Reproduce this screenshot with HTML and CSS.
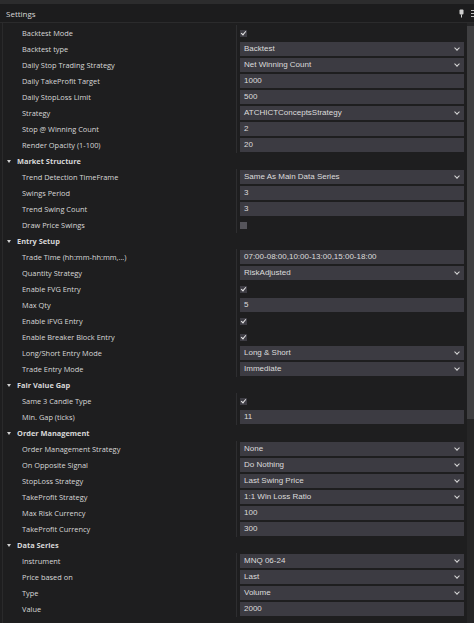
FILE: index.html
```html
<!DOCTYPE html>
<html>
<head>
<meta charset="utf-8">
<link rel="stylesheet" href="styles.css">
</head>
<body>
<div class="topbar"></div>
<div class="header">
  <span class="title">Settings</span>
  <span class="tools">
    <svg class="pin" width="5" height="9" viewBox="0 0 5 9"><rect x="0.5" y="0.5" width="4" height="5" rx="1" fill="#cfcfcf"/><rect x="2" y="5.5" width="1" height="3" fill="#cfcfcf"/></svg>
    <svg class="more" width="4" height="9" viewBox="0 0 4 9"><rect x="1" y="1" width="3" height="1" fill="#bdbdbd"/><rect x="1" y="4" width="3" height="1" fill="#bdbdbd"/><rect x="1" y="7" width="3" height="1" fill="#bdbdbd"/></svg>
  </span>
</div>
<div class="main">
  <div class="list">
    <div class="row"><div class="label">Backtest Mode</div><div class="value"><span class="check on"></span></div></div>
    <div class="row"><div class="label">Backtest type</div><div class="value"><div class="box select">Backtest</div></div></div>
    <div class="row"><div class="label">Daily Stop Trading Strategy</div><div class="value"><div class="box select">Net Winning Count</div></div></div>
    <div class="row"><div class="label">Daily TakeProfit Target</div><div class="value"><div class="box">1000</div></div></div>
    <div class="row"><div class="label">Daily StopLoss Limit</div><div class="value"><div class="box">500</div></div></div>
    <div class="row"><div class="label">Strategy</div><div class="value"><div class="box select">ATCHICTConceptsStrategy</div></div></div>
    <div class="row"><div class="label">Stop @ Winning Count</div><div class="value"><div class="box">2</div></div></div>
    <div class="row"><div class="label">Render Opacity (1-100)</div><div class="value"><div class="box">20</div></div></div>

    <div class="row section"><div class="label"><span class="tri"></span>Market Structure</div></div>
    <div class="row"><div class="label">Trend Detection TimeFrame</div><div class="value"><div class="box select">Same As Main Data Series</div></div></div>
    <div class="row"><div class="label">Swings Period</div><div class="value"><div class="box">3</div></div></div>
    <div class="row"><div class="label">Trend Swing Count</div><div class="value"><div class="box">3</div></div></div>
    <div class="row"><div class="label">Draw Price Swings</div><div class="value"><span class="check"></span></div></div>

    <div class="row section"><div class="label"><span class="tri"></span>Entry Setup</div></div>
    <div class="row"><div class="label">Trade Time (hh:mm-hh:mm,...)</div><div class="value"><div class="box">07:00-08:00,10:00-13:00,15:00-18:00</div></div></div>
    <div class="row"><div class="label">Quantity Strategy</div><div class="value"><div class="box select">RiskAdjusted</div></div></div>
    <div class="row"><div class="label">Enable FVG Entry</div><div class="value"><span class="check on"></span></div></div>
    <div class="row"><div class="label">Max Qty</div><div class="value"><div class="box">5</div></div></div>
    <div class="row"><div class="label">Enable iFVG Entry</div><div class="value"><span class="check on"></span></div></div>
    <div class="row"><div class="label">Enable Breaker Block Entry</div><div class="value"><span class="check on"></span></div></div>
    <div class="row"><div class="label">Long/Short Entry Mode</div><div class="value"><div class="box select">Long &amp; Short</div></div></div>
    <div class="row"><div class="label">Trade Entry Mode</div><div class="value"><div class="box select">Immediate</div></div></div>

    <div class="row section"><div class="label"><span class="tri"></span>Fair Value Gap</div></div>
    <div class="row"><div class="label">Same 3 Candle Type</div><div class="value"><span class="check on"></span></div></div>
    <div class="row"><div class="label">Min. Gap (ticks)</div><div class="value"><div class="box">11</div></div></div>

    <div class="row section"><div class="label"><span class="tri"></span>Order Management</div></div>
    <div class="row"><div class="label">Order Management Strategy</div><div class="value"><div class="box select">None</div></div></div>
    <div class="row"><div class="label">On Opposite Signal</div><div class="value"><div class="box select">Do Nothing</div></div></div>
    <div class="row"><div class="label">StopLoss Strategy</div><div class="value"><div class="box select">Last Swing Price</div></div></div>
    <div class="row"><div class="label">TakeProfit Strategy</div><div class="value"><div class="box select">1:1 Win Loss Ratio</div></div></div>
    <div class="row"><div class="label">Max Risk Currency</div><div class="value"><div class="box">100</div></div></div>
    <div class="row"><div class="label">TakeProfit Currency</div><div class="value"><div class="box">300</div></div></div>

    <div class="row section"><div class="label"><span class="tri"></span>Data Series</div></div>
    <div class="row"><div class="label">Instrument</div><div class="value"><div class="box select">MNQ 06-24</div></div></div>
    <div class="row"><div class="label">Price based on</div><div class="value"><div class="box select">Last</div></div></div>
    <div class="row"><div class="label">Type</div><div class="value"><div class="box select">Volume</div></div></div>
    <div class="row"><div class="label">Value</div><div class="value"><div class="box">2000</div></div></div>
  </div>
  <div class="scrollbar"><div class="thumb"></div></div>
</div>
</body>
</html>
```
FILE: styles.css
```css
html, body {
  margin: 0;
  padding: 0;
  background: #1e1e1f;
  width: 474px;
  height: 623px;
  overflow: hidden;
}
body {
  font-family: "Open Sans", "Noto Sans", sans-serif;
  color: #d6d6d6;
}
.topbar {
  height: 4px;
  background: #2c2c2d;
}
.header {
  height: 18px;
  display: flex;
  align-items: center;
  justify-content: space-between;
  background: #1c1c1d;
  border-bottom: 1px solid #2b2b2c;
  padding-left: 6px;
}
.title {
  font-size: 8px;
  color: #d8d8d8;
}
.tools {
  display: flex;
  align-items: center;
  gap: 6px;
}
.pin { display: block; }
.more { display: block; }
.main {
  display: flex;
  height: 600px;
}
.list {
  flex: 1;
  padding-top: 2px;
  border-left: 1px solid #2a2a2b;
  margin-left: 2px;
}
.row {
  display: grid;
  grid-template-columns: 233px 1fr;
  height: 16px;
  align-items: center;
}
.label {
  padding-left: 19px;
  font-size: 7.4px;
  color: #d8d8d8;
  white-space: nowrap;
  line-height: 16px;
}
.section .label {
  padding-left: 4px;
  font-weight: bold;
  display: flex;
  align-items: center;
}
.tri {
  width: 0;
  height: 0;
  border-left: 2.5px solid transparent;
  border-right: 2.5px solid transparent;
  border-top: 3.5px solid #d0d0d0;
  margin-right: 6px;
}
.value {
  height: 16px;
  border-left: 1px solid #2e2e30;
  padding: 1px 3px 1px 3px;
  box-sizing: border-box;
  display: flex;
  align-items: center;
}
.box {
  flex: 1;
  height: 14px;
  background: #3c3b42;
  box-sizing: border-box;
  padding-left: 4px;
  font-family: "Liberation Sans", Arial, sans-serif;
  font-size: 8px;
  line-height: 14px;
  color: #dcdcdc;
  white-space: nowrap;
  overflow: hidden;
}
.select {
  position: relative;
}
.select::after {
  content: "";
  position: absolute;
  right: 5px;
  top: 4px;
  width: 3px;
  height: 3px;
  border-right: 1.3px solid #d8d8d8;
  border-bottom: 1.3px solid #d8d8d8;
  transform: rotate(45deg);
}
.check {
  width: 7px;
  height: 7px;
  background: #3e3d44;
  position: relative;
}
.check:not(.on) {
  background: #55545a;
}
.check.on::after {
  content: "";
  position: absolute;
  left: 2px;
  top: 0.5px;
  width: 2px;
  height: 4px;
  border-right: 1.2px solid #e6e6e6;
  border-bottom: 1.2px solid #e6e6e6;
  transform: rotate(40deg);
}
.scrollbar {
  width: 7px;
  background: #252526;
  padding-top: 3px;
}
.thumb {
  height: 393px;
  background: #3f3f41;
}
```
